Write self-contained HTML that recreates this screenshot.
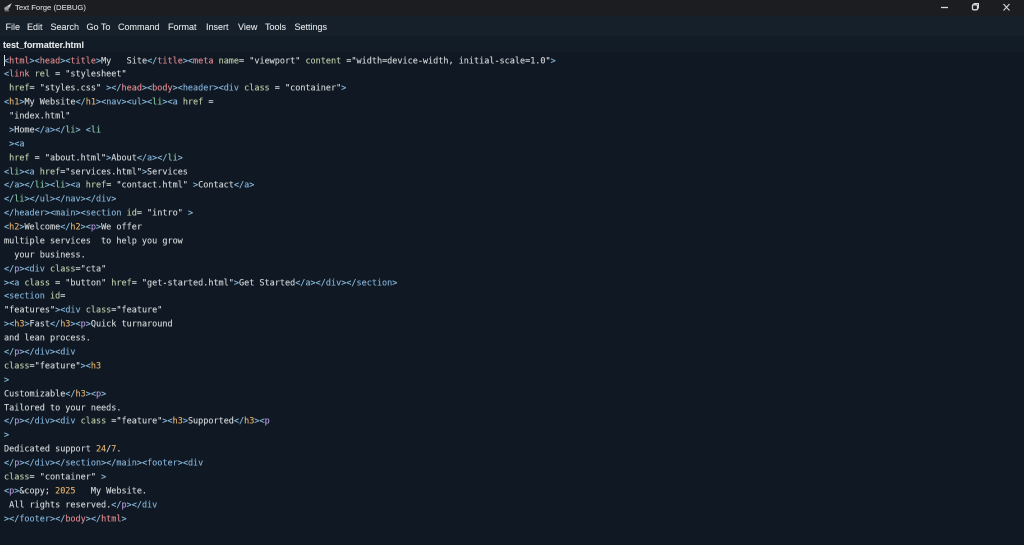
<!DOCTYPE html>
<html><head><meta charset="utf-8"><style>
html,body{margin:0;padding:0;width:1024px;height:544px;overflow:hidden;background:#101923}
#t{position:absolute;left:0;top:0;width:1024px;height:16px;background:#1c1d20}
#m{position:absolute;left:0;top:16px;width:1024px;height:20px;background:#15202b}
#tb{position:absolute;left:0;top:36px;width:1024px;height:16px;background:#121c26}
.u{position:absolute;font-family:"Liberation Sans",sans-serif;font-size:9px;color:#dfe3e6;white-space:pre;line-height:12px;-webkit-text-stroke:.1px currentColor}
#c{position:absolute;left:0;top:0;width:1024px;height:544px;transform:translateY(.5px)}
.l{position:absolute;left:4px;font-family:"DejaVu Sans Mono",monospace;font-size:8.49px;line-height:14px;color:#d5d9dc;white-space:pre;-webkit-text-stroke:.12px currentColor}
i{font-style:normal}
.p{color:#8abbdd}.r{color:#e58a8f}.b{color:#84b4dc}.g{color:#8cd0a8}.a{color:#bccdaa}.o{color:#e7b26c}.v{color:#b49ade}
</style></head><body>
<div id="t"></div><div id="m"></div><div id="tb"></div>
<svg style="position:absolute;left:3px;top:2px" width="10" height="11" viewBox="0 0 10 11"><path d="M1 6l3-2 5-3-2 4-2 3H2z" fill="#9aa0a6"/><path d="M5 4l3-2-2 3z" fill="#eee"/><path d="M1 8h5v1.500H2z" fill="#666"/></svg>
<div class="u" style="left:15px;top:2px;font-size:7.700px;color:#d5d7d9">Text Forge (DEBUG)</div>
<svg style="position:absolute;left:940px;top:2px" width="80" height="10" viewBox="0 0 80 10" fill="none" stroke="#d8d8d8"><path d="M1 5.500h7" stroke-width="1.300"/><rect x="32.500" y="2.800" width="5" height="5" rx="1" stroke-width="1.300"/><path d="M34 2.200V1.500h4.500v4.500H37.800" stroke-width="1"/><path d="M63.500 2l6 6.500M69.500 2l-6 6.500" stroke-width="1.100"/></svg>
<div class="u" style="left:5.500px;top:21px">File</div>
<div class="u" style="left:27px;top:21px">Edit</div>
<div class="u" style="left:50.500px;top:21px">Search</div>
<div class="u" style="left:86.500px;top:21px">Go To</div>
<div class="u" style="left:118px;top:21px">Command</div>
<div class="u" style="left:168px;top:21px">Format</div>
<div class="u" style="left:206px;top:21px">Insert</div>
<div class="u" style="left:238px;top:21px">View</div>
<div class="u" style="left:265px;top:21px">Tools</div>
<div class="u" style="left:294.500px;top:21px">Settings</div>
<div class="u" style="left:3px;top:39px;font-weight:bold;font-size:8.950px;color:#e6e8ea">test_formatter.html</div>
<div style="position:absolute;left:4px;top:55px;width:1px;height:11px;background:#dfe3e6"></div>
<div id="c">
<div class="l" style="top:53.500px"><i class="p">&lt;</i><i class="r">html</i><i class="p">&gt;&lt;</i><i class="r">head</i><i class="p">&gt;&lt;</i><i class="r">title</i><i class="p">&gt;</i>My   Site<i class="p">&lt;/</i><i class="r">title</i><i class="p">&gt;&lt;</i><i class="r">meta</i> <i class="a">name</i>= "viewport" <i class="a">content</i> ="width=device-width, initial-scale=1.0"<i class="p">&gt;</i></div>
<div class="l" style="top:67.380px"><i class="p">&lt;</i><i class="r">link</i> <i class="a">rel</i> = "stylesheet"</div>
<div class="l" style="top:81.260px"> <i class="a">href</i>= "styles.css" <i class="p">&gt;&lt;/</i><i class="r">head</i><i class="p">&gt;&lt;</i><i class="r">body</i><i class="p">&gt;&lt;</i><i class="b">header</i><i class="p">&gt;&lt;</i><i class="b">div</i> <i class="a">class</i> = "container"<i class="p">&gt;</i></div>
<div class="l" style="top:95.140px"><i class="p">&lt;</i><i class="o">h1</i><i class="p">&gt;</i>My Website<i class="p">&lt;/</i><i class="o">h1</i><i class="p">&gt;&lt;</i><i class="b">nav</i><i class="p">&gt;&lt;</i><i class="b">ul</i><i class="p">&gt;&lt;</i><i class="g">li</i><i class="p">&gt;&lt;</i><i class="b">a</i> <i class="a">href</i> =</div>
<div class="l" style="top:109.020px"> "index.html"</div>
<div class="l" style="top:122.900px"> <i class="p">&gt;</i>Home<i class="p">&lt;/</i><i class="b">a</i><i class="p">&gt;&lt;/</i><i class="g">li</i><i class="p">&gt;</i> <i class="p">&lt;</i><i class="g">li</i></div>
<div class="l" style="top:136.780px"> <i class="p">&gt;&lt;</i><i class="b">a</i></div>
<div class="l" style="top:150.660px"> <i class="a">href</i> = "about.html"<i class="p">&gt;</i>About<i class="p">&lt;/</i><i class="b">a</i><i class="p">&gt;&lt;/</i><i class="g">li</i><i class="p">&gt;</i></div>
<div class="l" style="top:164.540px"><i class="p">&lt;</i><i class="g">li</i><i class="p">&gt;&lt;</i><i class="b">a</i> <i class="a">href</i>="services.html"<i class="p">&gt;</i>Services</div>
<div class="l" style="top:178.420px"><i class="p">&lt;/</i><i class="b">a</i><i class="p">&gt;&lt;/</i><i class="g">li</i><i class="p">&gt;&lt;</i><i class="g">li</i><i class="p">&gt;&lt;</i><i class="b">a</i> <i class="a">href</i>= "contact.html" <i class="p">&gt;</i>Contact<i class="p">&lt;/</i><i class="b">a</i><i class="p">&gt;</i></div>
<div class="l" style="top:192.300px"><i class="p">&lt;/</i><i class="g">li</i><i class="p">&gt;&lt;/</i><i class="b">ul</i><i class="p">&gt;&lt;/</i><i class="b">nav</i><i class="p">&gt;&lt;/</i><i class="b">div</i><i class="p">&gt;</i></div>
<div class="l" style="top:206.180px"><i class="p">&lt;/</i><i class="b">header</i><i class="p">&gt;&lt;</i><i class="b">main</i><i class="p">&gt;&lt;</i><i class="b">section</i> <i class="a">id</i>= "intro" <i class="p">&gt;</i></div>
<div class="l" style="top:220.060px"><i class="p">&lt;</i><i class="o">h2</i><i class="p">&gt;</i>Welcome<i class="p">&lt;/</i><i class="o">h2</i><i class="p">&gt;&lt;</i><i class="v">p</i><i class="p">&gt;</i>We offer</div>
<div class="l" style="top:233.940px">multiple services  to help you grow</div>
<div class="l" style="top:247.820px">  your business.</div>
<div class="l" style="top:261.700px"><i class="p">&lt;/</i><i class="v">p</i><i class="p">&gt;&lt;</i><i class="b">div</i> <i class="a">class</i>="cta"</div>
<div class="l" style="top:275.580px"><i class="p">&gt;&lt;</i><i class="b">a</i> <i class="a">class</i> = "button" <i class="a">href</i>= "get-started.html"<i class="p">&gt;</i>Get Started<i class="p">&lt;/</i><i class="b">a</i><i class="p">&gt;&lt;/</i><i class="b">div</i><i class="p">&gt;&lt;/</i><i class="b">section</i><i class="p">&gt;</i></div>
<div class="l" style="top:289.460px"><i class="p">&lt;</i><i class="b">section</i> <i class="a">id</i>=</div>
<div class="l" style="top:303.340px">"features"<i class="p">&gt;&lt;</i><i class="b">div</i> <i class="a">class</i>="feature"</div>
<div class="l" style="top:317.220px"><i class="p">&gt;&lt;</i><i class="o">h3</i><i class="p">&gt;</i>Fast<i class="p">&lt;/</i><i class="o">h3</i><i class="p">&gt;&lt;</i><i class="v">p</i><i class="p">&gt;</i>Quick turnaround</div>
<div class="l" style="top:331.100px">and lean process.</div>
<div class="l" style="top:344.980px"><i class="p">&lt;/</i><i class="v">p</i><i class="p">&gt;&lt;/</i><i class="b">div</i><i class="p">&gt;&lt;</i><i class="b">div</i></div>
<div class="l" style="top:358.860px"><i class="a">class</i>="feature"<i class="p">&gt;&lt;</i><i class="o">h3</i></div>
<div class="l" style="top:372.740px"><i class="p">&gt;</i></div>
<div class="l" style="top:386.620px">Customizable<i class="p">&lt;/</i><i class="o">h3</i><i class="p">&gt;&lt;</i><i class="v">p</i><i class="p">&gt;</i></div>
<div class="l" style="top:400.500px">Tailored to your needs.</div>
<div class="l" style="top:414.380px"><i class="p">&lt;/</i><i class="v">p</i><i class="p">&gt;&lt;/</i><i class="b">div</i><i class="p">&gt;&lt;</i><i class="b">div</i> <i class="a">class</i> ="feature"<i class="p">&gt;&lt;</i><i class="o">h3</i><i class="p">&gt;</i>Supported<i class="p">&lt;/</i><i class="o">h3</i><i class="p">&gt;&lt;</i><i class="v">p</i></div>
<div class="l" style="top:428.260px"><i class="p">&gt;</i></div>
<div class="l" style="top:442.140px">Dedicated support <i class="o">24</i>/<i class="o">7</i>.</div>
<div class="l" style="top:456.020px"><i class="p">&lt;/</i><i class="v">p</i><i class="p">&gt;&lt;/</i><i class="b">div</i><i class="p">&gt;&lt;/</i><i class="b">section</i><i class="p">&gt;&lt;/</i><i class="b">main</i><i class="p">&gt;&lt;</i><i class="b">footer</i><i class="p">&gt;&lt;</i><i class="b">div</i></div>
<div class="l" style="top:469.900px"><i class="a">class</i>= "container" <i class="p">&gt;</i></div>
<div class="l" style="top:483.780px"><i class="p">&lt;</i><i class="v">p</i><i class="p">&gt;</i>&amp;copy; <i class="o">2025</i>   My Website.</div>
<div class="l" style="top:497.660px"> All rights reserved.<i class="p">&lt;/</i><i class="v">p</i><i class="p">&gt;&lt;/</i><i class="b">div</i></div>
<div class="l" style="top:511.540px"><i class="p">&gt;&lt;/</i><i class="b">footer</i><i class="p">&gt;&lt;/</i><i class="r">body</i><i class="p">&gt;&lt;/</i><i class="r">html</i><i class="p">&gt;</i></div>
</div>
</body></html>
